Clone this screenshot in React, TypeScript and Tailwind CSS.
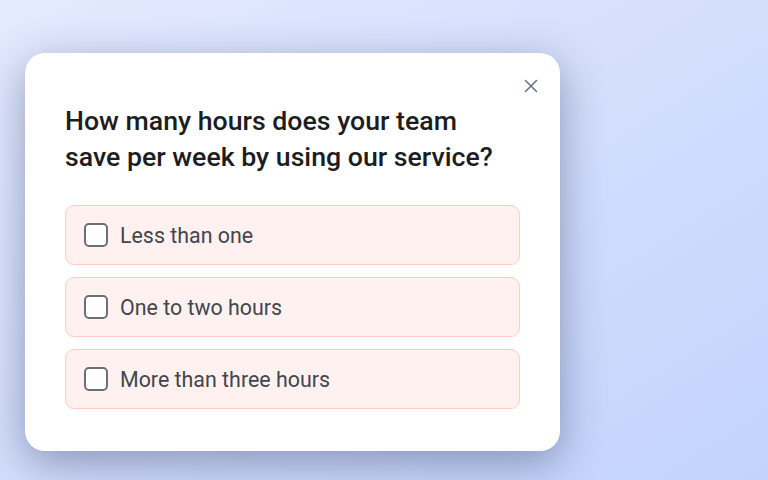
import React from "react";

const options = ["Less than one", "One to two hours", "More than three hours"];

export default function App() {
  return (
    <div
      className="w-[768px] h-[480px] overflow-hidden bg-gradient-to-br from-[#e4eafe] to-[#c3d3fc] pt-[53px] pl-[25px]"
      style={{ fontFamily: "Roboto, 'Noto Sans', sans-serif" }}
    >
      <div className="relative w-[535px] h-[398px] bg-white rounded-[20px] shadow-[0_12px_44px_rgba(30,41,80,0.4)] pt-[50px] px-[40px]">
        <button className="absolute top-[25px] right-[21px] w-[16px] h-[16px] flex items-center justify-center text-[#6b7280]">
          <svg width="14" height="14" viewBox="0 0 14 14" fill="none" stroke="currentColor" strokeWidth="1.6" strokeLinecap="round">
            <path d="M1.5 1.5 L12.5 12.5 M12.5 1.5 L1.5 12.5" />
          </svg>
        </button>
        <h2 className="text-[26.7px] leading-[36px] font-medium text-[#1c1d20]">
          How many hours does your team
          <br />
          save per week by using our service?
        </h2>
        <div className="mt-[30px] flex flex-col gap-[12px]">
          {options.map((o) => (
            <label
              key={o}
              className="h-[60px] flex items-center gap-[12px] pl-[18px] rounded-[9px] border border-[#fecdc6] bg-[#fff1ef]"
            >
              <span className="w-[24px] h-[24px] rounded-[5px] border-2 border-[#6b6f76] bg-white shrink-0" />
              <span className="text-[21.4px] text-[#42464d] pt-[3px]">{o}</span>
            </label>
          ))}
        </div>
      </div>
    </div>
  );
}
